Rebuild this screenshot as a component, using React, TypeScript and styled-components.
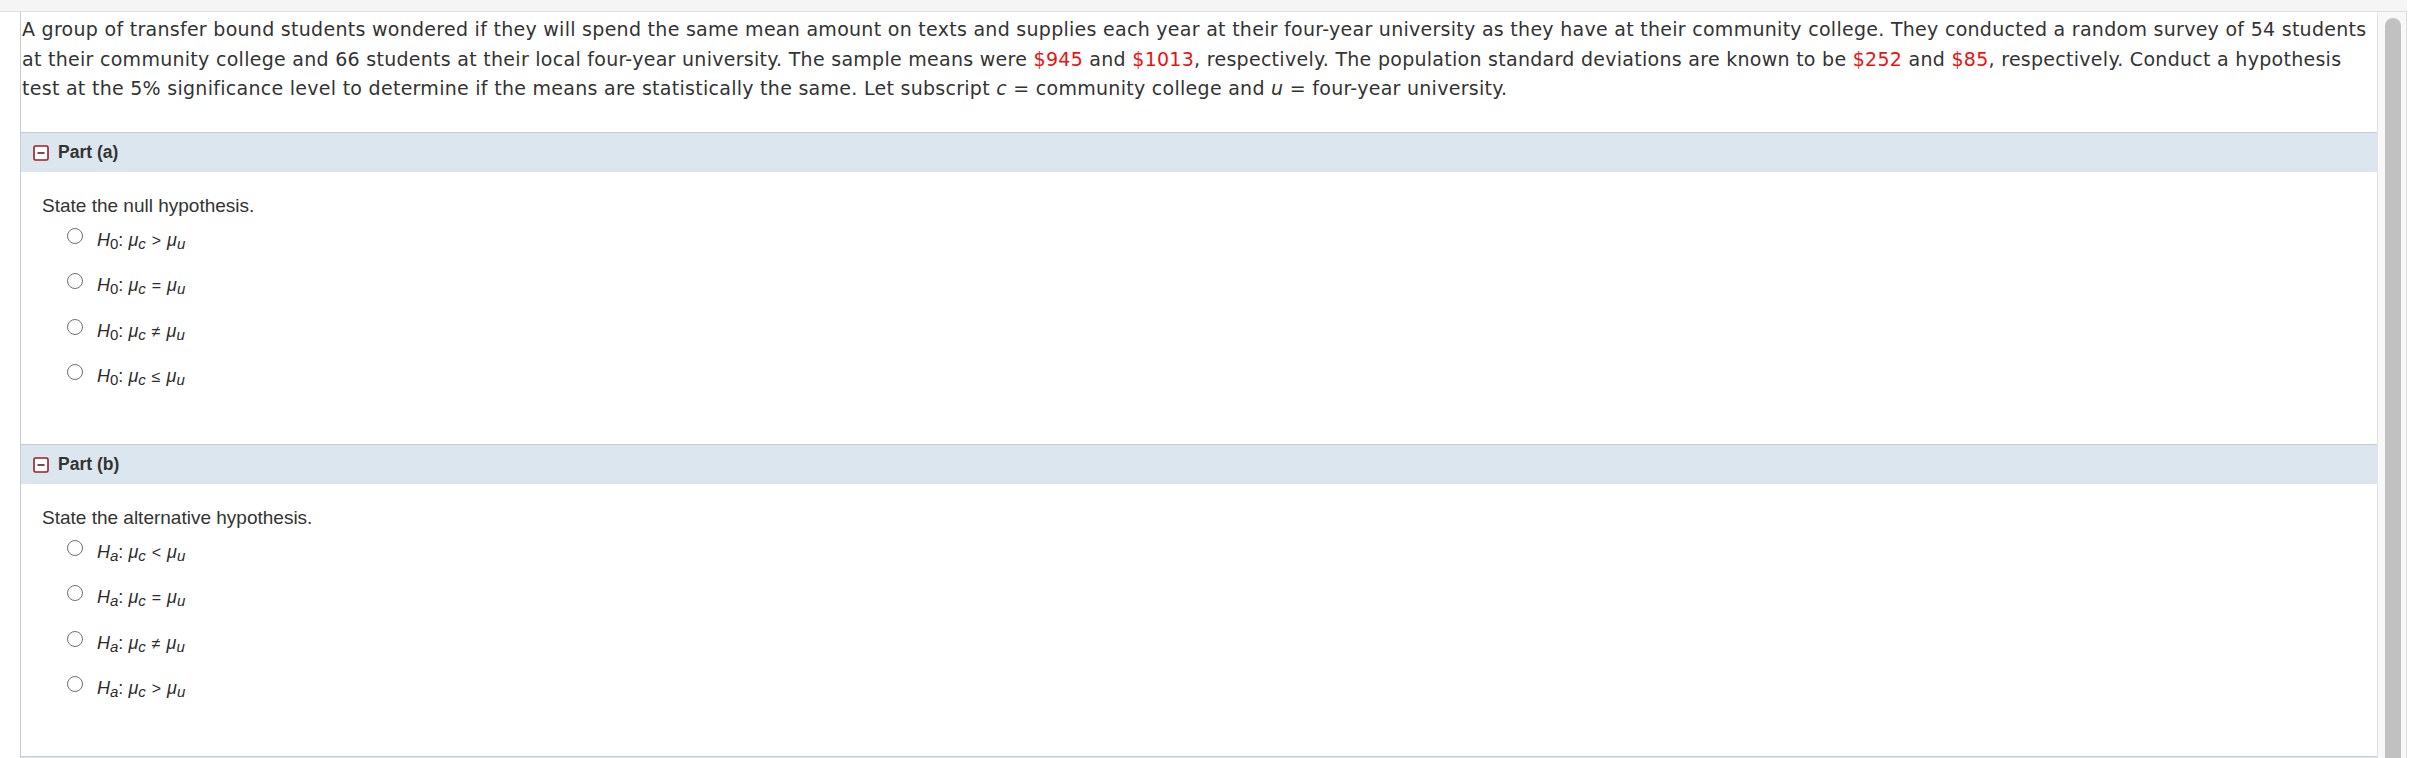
import React from "react";
import styled, { createGlobalStyle } from "styled-components";

const GlobalStyle = createGlobalStyle`
  html, body {
    margin: 0;
    padding: 0;
    background: #ffffff;
    overflow: hidden;
  }
  * { box-sizing: border-box; }
`;

const Page = styled.div`
  width: 2407px;
  height: 100vh;
  display: flex;
  flex-direction: column;
  overflow: hidden;
`;

const TopStrip = styled.div`
  height: 12px;
  flex: 0 0 12px;
  background: #f5f5f5;
  border-bottom: 1px solid #dedede;
`;

const Main = styled.div`
  flex: 1;
  min-height: 0;
  display: flex;
`;

const Gutter = styled.div`
  width: 20px;
  flex: 0 0 20px;
`;

const Content = styled.div`
  flex: 1;
  min-width: 0;
  border-left: 1px solid #cccccc;
  overflow: hidden;
`;

const Track = styled.div`
  width: 30px;
  flex: 0 0 30px;
  background: #f8f8f8;
  border-left: 1px solid #e4e4e4;
  border-right: 1px solid #dcdcdc;
  padding: 6px 0 0 7px;
`;

const Thumb = styled.div`
  width: 16px;
  height: 100%;
  background: #c1c1c1;
  border-radius: 8px 8px 0 0;
`;

const Problem = styled.p`
  margin: 0;
  padding: 3px 0 0 1px;
  font-family: "DejaVu Sans", Verdana, sans-serif;
  font-size: 19px;
  letter-spacing: 0.28px;
  line-height: 29.5px;
  color: #333333;
  height: 120px;
`;

const Money = styled.span`
  color: #ee1111;
`;

const Em = styled.i`
  font-style: italic;
`;

const Section = styled.section`
  height: 312px;
`;

const PartHeader = styled.div`
  height: 40px;
  border-top: 1px solid #cccccc;
  background: #dce6ef;
  display: flex;
  align-items: center;
  gap: 9px;
  padding-left: 12px;
  font-family: "Liberation Sans", Arial, sans-serif;
  font-weight: bold;
  font-size: 17.5px;
  color: #333333;
`;

const ToggleIcon = styled.svg`
  width: 16px;
  height: 16px;
  flex: 0 0 16px;
`;

const PartBody = styled.div`
  padding: 22px 0 0 21px;
  font-family: "Liberation Sans", Arial, sans-serif;
  color: #333333;
`;

const Question = styled.div`
  font-size: 19px;
  line-height: 24px;
  height: 24px;
  margin-bottom: 10px;
`;

const Options = styled.div`
  display: flex;
  flex-direction: column;
  padding-left: 25px;
`;

const OptionRow = styled.label`
  height: 45.33px;
  display: flex;
  align-items: flex-start;
  gap: 14px;
`;

const Radio = styled.input.attrs({ type: "radio" })`
  appearance: none;
  -webkit-appearance: none;
  margin: 0;
  width: 16px;
  height: 16px;
  flex: 0 0 16px;
  border: 1.6px solid #707070;
  border-radius: 50%;
  background: #ffffff;
`;

const MathLabel = styled.span`
  margin-top: 2px;
  font-family: "Liberation Sans", Arial, sans-serif;
  font-size: 18px;
  line-height: 20px;
  color: #2b2b2b;
  white-space: nowrap;
`;

const Var = styled.i`
  font-style: italic;
`;

const Sub = styled.sub<{ $italic?: boolean }>`
  font-size: 15px;
  font-style: ${(p) => (p.$italic ? "italic" : "normal")};
  vertical-align: -3px;
  line-height: 0;
`;

const Rel = styled.span`
  font-size: 16px;
  margin: 0 6px 0 6px;
`;

type RelSym = ">" | "<" | "=" | "≠" | "≤";

const Hyp: React.FC<{ sub: string; subItalic?: boolean; rel: RelSym }> = ({
  sub,
  subItalic,
  rel,
}) => (
  <MathLabel>
    <Var>H</Var>
    <Sub $italic={subItalic}>{sub}</Sub>:{" "}
    <Var>μ</Var>
    <Sub $italic>c</Sub>
    <Rel>{rel}</Rel>
    <Var>μ</Var>
    <Sub $italic>u</Sub>
  </MathLabel>
);

const MinusIcon = () => (
  <ToggleIcon viewBox="0 0 16 16">
    <rect x="1" y="1" width="14" height="14" rx="1.5" fill="#ffffff" stroke="#9a1f24" strokeWidth="1.6" />
    <line x1="4.5" y1="8" x2="11.5" y2="8" stroke="#5a1a1a" strokeWidth="1.6" />
  </ToggleIcon>
);

type PartProps = {
  label: string;
  question: string;
  name: string;
  sub: string;
  subItalic?: boolean;
  rels: RelSym[];
};

const Part: React.FC<PartProps> = ({ label, question, name, sub, subItalic, rels }) => (
  <Section>
    <PartHeader>
      <MinusIcon />
      <span>{label}</span>
    </PartHeader>
    <PartBody>
      <Question>{question}</Question>
      <Options>
        {rels.map((r, i) => (
          <OptionRow key={i}>
            <Radio name={name} />
            <Hyp sub={sub} subItalic={subItalic} rel={r} />
          </OptionRow>
        ))}
      </Options>
    </PartBody>
  </Section>
);

export default function App() {
  return (
    <>
      <GlobalStyle />
      <Page>
        <TopStrip />
        <Main>
          <Gutter />
          <Content>
            <Problem>
              A group of transfer bound students wondered if they will spend the same mean amount on texts and
              supplies each year at their four-year university as they have at their community college. They
              conducted a random survey of 54 students at their community college and 66 students at their local
              four-year university. The sample means were <Money>$945</Money> and <Money>$1013</Money>,
              respectively. The population standard deviations are known to be <Money>$252</Money> and{" "}
              <Money>$85</Money>, respectively. Conduct a hypothesis test at the 5% significance level to determine
              if the means are statistically the same. Let subscript <Em>c</Em> = community college and{" "}
              <Em>u</Em> = four-year university.
            </Problem>
            <Part
              label="Part (a)"
              question="State the null hypothesis."
              name="a"
              sub="0"
              rels={[">", "=", "≠", "≤"]}
            />
            <Part
              label="Part (b)"
              question="State the alternative hypothesis."
              name="b"
              sub="a"
              subItalic
              rels={["<", "=", "≠", ">"]}
            />
            <Part
              label="Part (c)"
              question="In words, state what your random variable represents."
              name="c"
              sub="0"
              rels={[]}
            />
          </Content>
          <Track>
            <Thumb />
          </Track>
        </Main>
      </Page>
    </>
  );
}
